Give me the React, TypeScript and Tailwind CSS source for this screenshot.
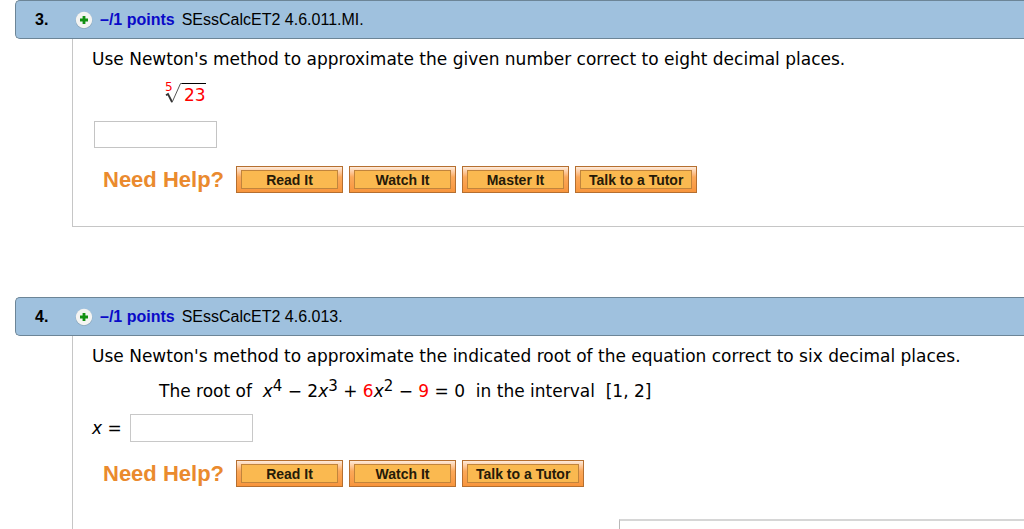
import type { ReactNode } from 'react';

type QuestionProps = {
  number: number;
  reference: string;
  children: ReactNode;
  last?: boolean;
};

const PlusIcon = () => (
  <svg width="18" height="18" viewBox="0 0 18 18" aria-hidden="true">
    <circle cx="9" cy="9.5" r="8.4" fill="#86a3b8" />
    <circle cx="9" cy="9" r="8.2" fill="#f4f4f2" />
    <path d="M7.6 5h2.8v2.6H13v2.8h-2.6V13H7.6v-2.6H5V7.6h2.6z" fill="#129012" />
  </svg>
);

const Question = ({ number, reference, children, last = false }: QuestionProps) => (
  <section className={last ? 'flex grow flex-col' : 'mb-[70px]'}>
    <header className="flex h-[39px] items-center rounded-l-[5px] border border-r-0 border-[#6c8597] bg-[#9fc1de] pl-[19px] font-['Liberation_Sans',Arial,sans-serif] text-base text-black">
      <h2 className="w-10 font-bold">{number}.</h2>
      <button type="button" aria-label={`Expand question ${number}`} className="mr-[7px]">
        <PlusIcon />
      </button>
      <a href="#points" className="mr-[7px] font-bold text-[#0a0ac8]">
        –/1 points
      </a>
      <span>{reference}</span>
    </header>
    <div
      className={
        last
          ? 'ml-[57px] flex grow flex-col border-l border-[#c6c6c6] pl-[19px]'
          : 'ml-[57px] h-[188px] border-b border-l border-[#c6c6c6] pl-[19px]'
      }
    >
      {children}
    </div>
  </section>
);

const NeedHelp = ({ options }: { options: string[] }) => (
  <div className="flex items-center gap-[6px] pl-[11px] font-['Liberation_Sans',Arial,sans-serif]">
    <span className="w-[127px] text-[22px] leading-[27px] font-bold text-[#ea8a2e]">Need Help?</span>
    {options.map((option) => (
      <button
        key={option}
        type="button"
        className="h-[27px] min-w-[107px] border border-[#b56f30] bg-linear-to-b from-[#fdeada] via-[#fba95a] via-40% to-[#f8953c] px-1 py-[3px] text-sm font-bold text-[#251a08]"
      >
        <span className="flex h-[19px] items-center justify-center border border-[#c1843c] bg-[#fab950] px-2">
          {option}
        </span>
      </button>
    ))}
  </div>
);

const FifthRoot = ({ children }: { children: ReactNode }) => (
  <div className="ml-[73px] flex h-6 items-start text-[#ff0000]">
    <span className="w-2 text-xs leading-3">5</span>
    <svg width="17" height="22" viewBox="0 0 17 22" className="mt-px -ml-2" aria-hidden="true">
      <path d="M1 13.2l2-1.2 4 8" fill="none" stroke="#333" strokeWidth="1.8" />
      <path d="M7 20.5L15.5 1.5H17" fill="none" stroke="#555" strokeWidth="1" />
    </svg>
    <span className="mt-[2px] border-t border-black pl-[2px] leading-[22px]">{children}</span>
  </div>
);

const Power = ({ children }: { children: ReactNode }) => (
  <sup className="relative -top-[6px] align-baseline text-[15px] leading-none">{children}</sup>
);

const App = () => (
  <main className="flex min-h-screen flex-col bg-white pl-[15px] font-['DejaVu_Sans',Verdana,sans-serif] text-[17px] leading-5 text-black">
    <Question number={3} reference="SEssCalcET2 4.6.011.MI.">
      <p className="pt-[10px]">
        Use Newton's method to approximate the given number correct to eight decimal places.
      </p>
      <div className="mt-3">
        <FifthRoot>23</FifthRoot>
      </div>
      <input
        type="text"
        aria-label="Fifth root of 23"
        className="mt-4 mb-[18px] ml-[2px] block h-[27px] w-[123px] border border-[#c4c4c4] px-1"
      />
      <NeedHelp options={['Read It', 'Watch It', 'Master It', 'Talk to a Tutor']} />
    </Question>

    <Question number={4} reference="SEssCalcET2 4.6.013." last>
      <p className="pt-[10px]">
        Use Newton's method to approximate the indicated root of the equation correct to six decimal places.
      </p>
      <p className="mt-[15px] pl-[67px]">
        The root of&nbsp; <i>x</i>
        <Power>4</Power> − 2<i>x</i>
        <Power>3</Power> + <span className="text-[#ff0000]">6</span>
        <i>x</i>
        <Power>2</Power> − <span className="text-[#ff0000]">9</span> = 0&nbsp; in the interval&nbsp; [1, 2]
      </p>
      <div className="mt-[13px] mb-[18px] flex items-center">
        <label htmlFor="root-x" className="w-[38px] whitespace-nowrap">
          <i>x</i> =
        </label>
        <input id="root-x" type="text" className="h-7 w-[123px] border border-[#c8c8c8] px-1" />
      </div>
      <NeedHelp options={['Read It', 'Watch It', 'Talk to a Tutor']} />
      <div className="mt-auto flex justify-end">
        <div className="h-[10px] w-[405px] border-t-2 border-l border-t-[#d6d6d6] border-l-[#b8b8b8]" />
      </div>
    </Question>
  </main>
);

export default App;
